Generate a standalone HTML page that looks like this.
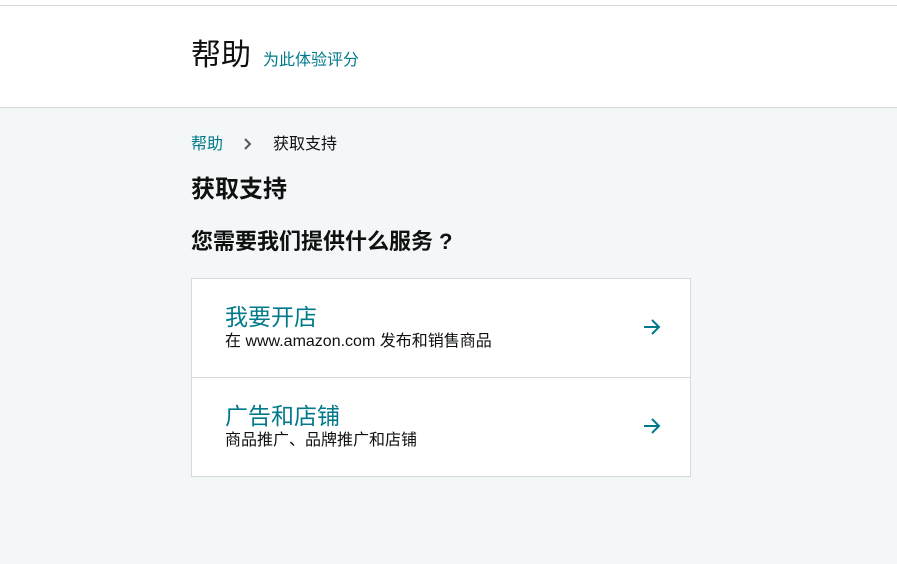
<!DOCTYPE html>
<html><head><meta charset="utf-8"><style>
*{margin:0;padding:0;box-sizing:border-box}
body{width:897px;height:564px;background:#f3f7f8;font-family:"Liberation Sans","Noto Sans CJK SC",sans-serif;position:relative;overflow:hidden}
.top{position:absolute;left:0;top:0;width:897px;height:6px;background:#fff}
.hdr{position:absolute;left:0;top:5px;width:897px;height:103px;background:#fff;border-top:1px solid #d5d9d9;border-bottom:1px solid #d5d9d9}
.t{position:absolute;left:191px;top:36px;font-size:30px;color:#0f1111;line-height:40px}
.s{position:absolute;left:263px;top:50px;font-size:16px;color:#007a8a;line-height:22px}
.bc{position:absolute;top:134px;font-size:16px;line-height:22px}
h1{position:absolute;left:191px;top:174px;font-size:24px;font-weight:bold;color:#0f1111;line-height:32px}
h2{position:absolute;left:191px;top:227px;font-size:22px;font-weight:bold;color:#0f1111;line-height:30px}
h2 span{padding-left:6px}
.card{position:absolute;left:191px;width:500px;height:100px;background:#fff;border:1px solid #d5dbdb}
.ct{position:absolute;left:33px;top:22px;font-size:23px;color:#007a8a;line-height:32px}
.cs{position:absolute;left:33px;top:52px;font-size:16px;color:#0f1111;line-height:22px}
.ar{position:absolute;left:450px;top:38px}
</style></head><body>
<div class="top"></div>
<div class="hdr"></div>
<div class="t">帮助</div>
<div class="s">为此体验评分</div>
<div class="bc" style="left:191px;color:#007a8a">帮助</div>
<svg style="position:absolute;left:242px;top:137px" width="12" height="14"><path d="M3 2l5 5-5 5" fill="none" stroke="#565959" stroke-width="2"/></svg>
<div class="bc" style="left:273px;color:#0f1111">获取支持</div>
<h1>获取支持</h1>
<h2>您需要我们提供什么服务<span>?</span></h2>
<div class="card" style="top:278px"><div class="ct">我要开店</div><div class="cs">在 www.amazon.com 发布和销售商品</div>
<svg class="ar" width="20" height="20"><path d="M2 10h15M10 3l7 7-7 7" fill="none" stroke="#007a8a" stroke-width="2"/></svg></div>
<div class="card" style="top:377px"><div class="ct">广告和店铺</div><div class="cs">商品推广、品牌推广和店铺</div>
<svg class="ar" width="20" height="20"><path d="M2 10h15M10 3l7 7-7 7" fill="none" stroke="#007a8a" stroke-width="2"/></svg></div>
</body></html>
